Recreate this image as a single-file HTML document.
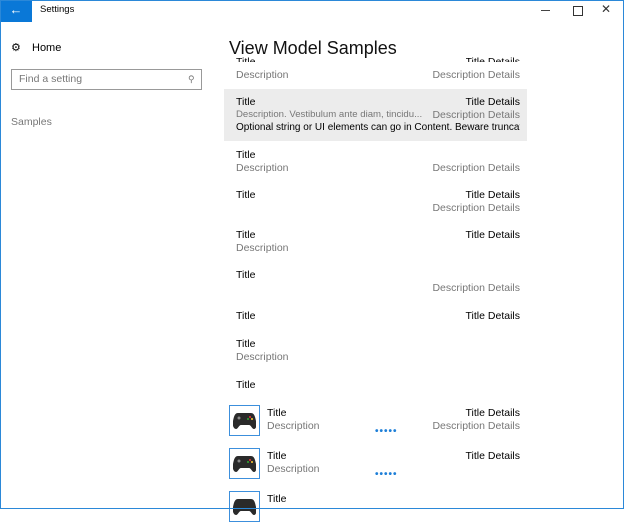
<!DOCTYPE html><html><head><style>
body{margin:0;width:624px;height:509px;overflow:hidden;background:#fff;font-family:"Liberation Sans",sans-serif;position:relative;}
.b{position:absolute;border:1px solid #2b88d8;left:0;top:0;width:622px;height:507px;pointer-events:none}
.t{position:absolute;font-size:10.5px;color:#000;line-height:12px;white-space:nowrap}
.g{color:#777}
.r{text-align:right;right:104px}
.ic{position:absolute;left:229px;width:29px;height:29px;border:1px solid #3c8fdc;background:#fff;overflow:hidden}
.ic svg{position:absolute;left:3px;top:6px}
.dots{position:absolute;left:375px;color:#1e7fd8;font-size:10px;letter-spacing:1px;font-weight:bold}
</style></head><body>
<div style="position:absolute;left:0;top:0;width:32px;height:22px;background:#0a78d7;color:#fff;font-size:13px;text-align:center;line-height:20px">&#8592;</div>
<div class="t" style="left:40px;top:4px;font-size:9.5px">Settings</div>
<div style="position:absolute;left:541px;top:10px;width:9px;height:1px;background:#444"></div>
<div style="position:absolute;left:573px;top:6px;width:8px;height:8px;border:1px solid #333"></div>
<div class="t" style="left:601px;top:3px;font-size:12px;color:#333">&#10005;</div>
<div class="t" style="left:11px;top:42px;font-size:11px">&#9881;</div>
<div class="t" style="left:32px;top:42px;font-size:11px">Home</div>
<div style="position:absolute;left:11px;top:69px;width:189px;height:19px;border:1px solid #999"></div>
<div class="t g" style="left:19px;top:73px">Find a setting</div>
<div class="t g" style="left:188px;top:73px;font-size:9px">&#9906;</div>
<div class="t g" style="left:11px;top:116px">Samples</div>
<div class="t" style="left:229px;top:37px;font-size:18px;line-height:22px;color:#111">View Model Samples</div>
<div style="position:absolute;left:224px;top:89px;width:303px;height:52px;background:#ececec"></div>
<div class="t" style="left:236px;top:56px;height:6px;overflow:hidden">Title</div>
<div class="t r" style="top:56px;height:6px;overflow:hidden">Title Details</div>
<div class="t g" style="left:236px;top:69px">Description</div><div class="t g r" style="top:69px">Description Details</div>
<div class="t" style="left:236px;top:96px">Title</div><div class="t r" style="top:96px">Title Details</div>
<div class="t g" style="left:236px;top:109px;font-size:9.6px">Description. Vestibulum ante diam, tincidu...</div><div class="t g r" style="top:109px">Description Details</div>
<div class="t" style="left:236px;top:122px;width:284px;overflow:hidden;font-size:10px">Optional string or UI elements can go in Content. Beware truncat</div>
<div class="t" style="left:236px;top:149px">Title</div>
<div class="t g" style="left:236px;top:162px">Description</div><div class="t g r" style="top:162px">Description Details</div>
<div class="t" style="left:236px;top:189px">Title</div><div class="t r" style="top:189px">Title Details</div>
<div class="t g r" style="top:202px">Description Details</div>
<div class="t" style="left:236px;top:229px">Title</div><div class="t r" style="top:229px">Title Details</div>
<div class="t g" style="left:236px;top:242px">Description</div>
<div class="t" style="left:236px;top:269px">Title</div>
<div class="t g r" style="top:282px">Description Details</div>
<div class="t" style="left:236px;top:310px">Title</div><div class="t r" style="top:310px">Title Details</div>
<div class="t" style="left:236px;top:338px">Title</div>
<div class="t g" style="left:236px;top:351px">Description</div>
<div class="t" style="left:236px;top:379px">Title</div>
<div class="ic" style="top:405px"><svg width="23" height="17" viewBox="0 0 23 17"><path d="M5 1h13c3 0 4 3 5 8s0 8-2 8-3-4-5-4H8c-2 0-3 4-5 4S-1 14 0 9s2-8 5-8z" fill="#2a2a2a"/><circle cx="6" cy="6" r="1.5" fill="#888"/><circle cx="17" cy="5" r="1" fill="#e33"/><circle cx="15" cy="7" r="1" fill="#3a3"/><circle cx="19" cy="7" r="1" fill="#fc3"/></svg></div>
<div class="t" style="left:267px;top:407px">Title</div><div class="t r" style="top:407px">Title Details</div>
<div class="t g" style="left:267px;top:420px">Description</div><div class="t g r" style="top:420px">Description Details</div>
<div class="dots" style="top:426px">•••••</div>
<div class="ic" style="top:448px"><svg width="23" height="17" viewBox="0 0 23 17"><path d="M5 1h13c3 0 4 3 5 8s0 8-2 8-3-4-5-4H8c-2 0-3 4-5 4S-1 14 0 9s2-8 5-8z" fill="#2a2a2a"/><circle cx="6" cy="6" r="1.5" fill="#888"/><circle cx="17" cy="5" r="1" fill="#e33"/><circle cx="15" cy="7" r="1" fill="#3a3"/><circle cx="19" cy="7" r="1" fill="#fc3"/></svg></div>
<div class="t" style="left:267px;top:450px">Title</div><div class="t r" style="top:450px">Title Details</div>
<div class="t g" style="left:267px;top:463px">Description</div>
<div class="dots" style="top:469px">•••••</div>
<div class="ic" style="top:491px"><svg width="23" height="17" viewBox="0 0 23 17"><path d="M5 1h13c3 0 4 3 5 8s0 8-2 8-3-4-5-4H8c-2 0-3 4-5 4S-1 14 0 9s2-8 5-8z" fill="#2a2a2a"/></svg></div>
<div class="t" style="left:267px;top:493px">Title</div>
<div class="b"></div>
</body></html>
